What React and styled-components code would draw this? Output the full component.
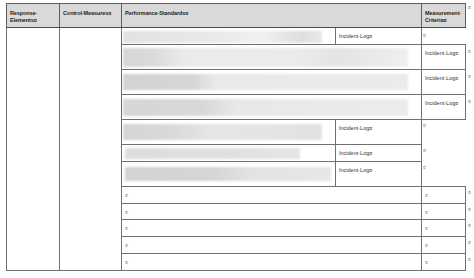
import React from 'react'
import styled, { createGlobalStyle } from 'styled-components'

const GlobalStyle = createGlobalStyle`
  html, body {
    margin: 0;
    padding: 0;
    background: #ffffff;
  }
  body {
    font-family: "Liberation Sans", Arial, sans-serif;
    color: #333;
  }
`

const Page = styled.div`
  width: 474px;
  height: 278px;
  padding: 3px 0 0 6px;
  box-sizing: border-box;
  overflow: hidden;
`

const Table = styled.table`
  border-collapse: collapse;
  table-layout: fixed;
  width: 468px;
`

const Row = styled.tr`
  height: ${p => p.$h}px;
`

const HeadCell = styled.th`
  background: #d9d9d9;
  border: 1px solid #606060;
  border-bottom: 1px solid #4a4a4a;
  padding: 6px 2px 0 3px;
  vertical-align: top;
  text-align: left;
  font-size: 5.5px;
  line-height: 7px;
  letter-spacing: -0.1px;
  white-space: nowrap;
  font-weight: 700;
  color: #1e1e1e;
`

const Cell = styled.td`
  border: 1px solid #707070;
  padding: ${p => (p.$bar ? '2px 0 0 1px' : '5px 3px 0 3px')};
  vertical-align: top;
  font-size: 5.5px;
  line-height: 7px;
  color: #333;
  overflow: hidden;
`

const EndMark = styled.td`
  border: none;
  padding: ${p => p.$pad || '3px 0 0 1px'};
  vertical-align: top;
  font-size: 5px;
  line-height: 6px;
  color: #777;
`

const Mark = styled.span`
  font-size: 5px;
  color: #777;
`

const Bar = styled.div`
  width: ${p => p.$w}px;
  height: ${p => p.$h}px;
  margin-top: ${p => p.$t || 0}px;
  margin-left: ${p => p.$l || 0}px;
  background: ${p => p.$bg};
  filter: blur(1.2px);
`

const bars = {
  r1: 'linear-gradient(90deg, #e2e2e2 0%, #e9e9e9 45%, #f1f1f1 70%, #dedede 90%, #e8e8e8 100%)',
  r2: 'linear-gradient(90deg, #d6d6d6 0%, #dadada 10%, #ebebeb 22%, #ececec 60%, #e4e4e4 75%, #efefef 100%)',
  r3: 'linear-gradient(90deg, #d3d3d3 0%, #d6d6d6 25%, #e9e9e9 32%, #ebebeb 100%)',
  r4: 'linear-gradient(90deg, #d6d6d6 0%, #d8d8d8 28%, #e8e8e8 40%, #ececec 100%)',
  r5: 'linear-gradient(90deg, #d5d5d5 0%, #d9d9d9 25%, #e6e6e6 45%, #e2e2e2 100%)',
  r6: 'linear-gradient(90deg, #dedede 0%, #e0e0e0 60%, #e6e6e6 100%)',
  r7: 'linear-gradient(90deg, #d3d3d3 0%, #d6d6d6 45%, #e3e3e3 62%, #e7e7e7 100%)',
}

const LOG = 'Incident·Log¤'

const App = () => {
  return (
    <Page>
      <GlobalStyle />
      <Table>
        <colgroup>
          <col style={{ width: 53 }} />
          <col style={{ width: 62 }} />
          <col style={{ width: 214 }} />
          <col style={{ width: 86 }} />
          <col style={{ width: 44 }} />
          <col style={{ width: 9 }} />
        </colgroup>
        <tbody>
          <Row $h={24}>
            <HeadCell>Response·<br />Elements¤</HeadCell>
            <HeadCell>Control·Measures¤</HeadCell>
            <HeadCell colSpan={2}>Performance·Standards¤</HeadCell>
            <HeadCell>Measurement·<br />Criteria¤</HeadCell>
            <EndMark $pad="0 0 0 2px">¤</EndMark>
          </Row>

          <Row $h={17}>
            <Cell rowSpan={12} />
            <Cell rowSpan={12} />
            <Cell $bar><Bar $w={199} $h={12} $t={1} $bg={bars.r1} /></Cell>
            <Cell>{LOG}</Cell>
            <EndMark $pad="4px 0 0 1px">¤</EndMark>
          </Row>

          <Row $h={25}>
            <Cell colSpan={2} $bar><Bar $w={285} $h={19} $t={1} $bg={bars.r2} /></Cell>
            <Cell>{LOG}</Cell>
            <EndMark $pad="3px 0 0 2px">¤</EndMark>
          </Row>
          <Row $h={25}>
            <Cell colSpan={2} $bar><Bar $w={285} $h={16} $t={2} $bg={bars.r3} /></Cell>
            <Cell>{LOG}</Cell>
            <EndMark $pad="3px 0 0 2px">¤</EndMark>
          </Row>
          <Row $h={25}>
            <Cell colSpan={2} $bar><Bar $w={285} $h={17} $t={2} $bg={bars.r4} /></Cell>
            <Cell>{LOG}</Cell>
            <EndMark $pad="3px 0 0 2px">¤</EndMark>
          </Row>

          <Row $h={25}>
            <Cell $bar><Bar $w={199} $h={16} $t={2} $bg={bars.r5} /></Cell>
            <Cell>{LOG}</Cell>
            <EndMark $pad="2px 0 0 1px">¤</EndMark>
          </Row>
          <Row $h={17}>
            <Cell $bar><Bar $w={175} $h={11} $t={1} $l={2} $bg={bars.r6} /></Cell>
            <Cell>{LOG}</Cell>
            <EndMark $pad="2px 0 0 1px">¤</EndMark>
          </Row>
          <Row $h={25}>
            <Cell $bar><Bar $w={206} $h={14} $t={3} $l={2} $bg={bars.r7} /></Cell>
            <Cell>{LOG}</Cell>
            <EndMark $pad="2px 0 0 1px">¤</EndMark>
          </Row>

          {[17, 16, 17, 17, 17].map((h, i) => (
            <Row key={i} $h={h}>
              <Cell colSpan={2}><Mark>¤</Mark></Cell>
              <Cell><Mark>¤</Mark></Cell>
              <EndMark $pad="2px 0 0 2px">¤</EndMark>
            </Row>
          ))}
        </tbody>
      </Table>
    </Page>
  )
}

export default App
